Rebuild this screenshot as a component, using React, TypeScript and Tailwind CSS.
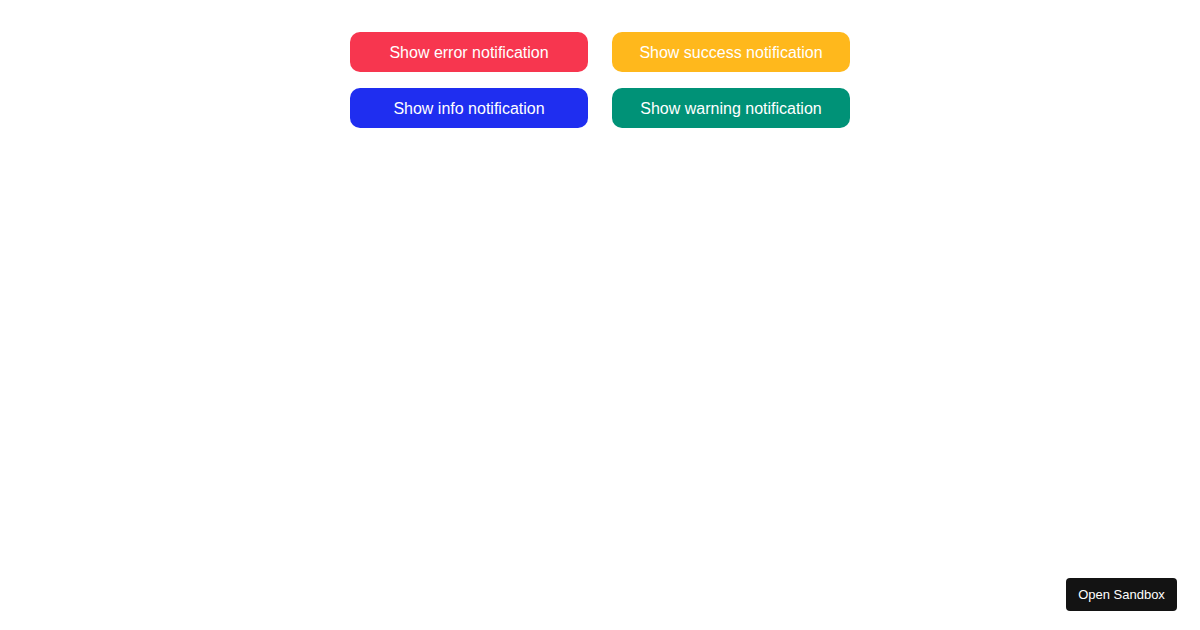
import React from "react";

export default function App() {
  const buttons = [
    { label: "Show error notification", cls: "bg-[#f7364f]" },
    { label: "Show success notification", cls: "bg-[#ffb81c]" },
    { label: "Show info notification", cls: "bg-[#1f2ef0]" },
    { label: "Show warning notification", cls: "bg-[#009277]" },
  ];
  return (
    <div className="relative w-full h-[630px] bg-white font-['Liberation_Sans',Arial,sans-serif]">
      <div className="flex justify-center pt-8">
        <div className="grid grid-cols-[238px_238px] gap-x-6 gap-y-4">
          {buttons.map((b) => (
            <button
              key={b.label}
              className={`${b.cls} h-10 pt-[2px] rounded-[10px] text-white text-base flex items-center justify-center`}
            >
              {b.label}
            </button>
          ))}
        </div>
      </div>
      <div className="fixed right-[23px] bottom-[19px] h-[33px] w-[111px] rounded bg-[#131313] text-white text-[13px] flex items-center justify-center">
        Open Sandbox
      </div>
    </div>
  );
}
